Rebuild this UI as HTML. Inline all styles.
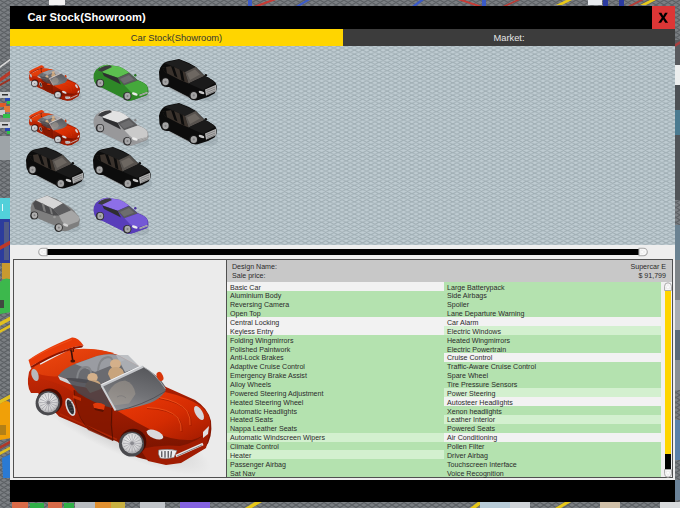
<!DOCTYPE html>
<html><head><meta charset="utf-8">
<style>
html,body{margin:0;padding:0;}
body{width:680px;height:508px;position:relative;overflow:hidden;background:#74787b;font-family:"Liberation Sans",sans-serif;}
.a{position:absolute;}
.rb{position:absolute;}
.rt{position:absolute;font-size:7.1px;line-height:8.87px;color:#2b2b2b;white-space:nowrap;}
.w{background:#f2f2f2;}
.g{background:#b4e2af;}
.l{background:#d3f0cf;}
</style></head><body>
<!-- background world -->
<svg class="a" style="left:0;top:0" width="680" height="508">
<defs>
<pattern id="bgp" width="8" height="5" patternUnits="userSpaceOnUse">
<rect width="8" height="5" fill="#7b7f83"/>
<path d="M0 0L4 2.5L8 0M0 5L4 2.5L8 5" stroke="#5c6064" stroke-width="1.1" fill="none"/>
</pattern>
</defs>
<rect width="680" height="508" fill="url(#bgp)"/>
<g>
<!-- left strip -->
<path d="M0,66 L11,58 L11,60 L0,68Z" fill="#d8d8d8"/>
<path d="M0,78 L11,70 L11,74 L0,82Z" fill="#b83a2a"/>
<path d="M0,84 L11,78 L11,80 L0,86Z" fill="#a03020"/>
<rect x="0" y="92" width="10" height="6" fill="#d0d2d4"/>
<rect x="2" y="94" width="6" height="1.5" fill="#303030"/>
<rect x="5" y="98" width="6" height="3" fill="#2a48b0"/>
<rect x="7" y="101" width="4" height="3" fill="#30c048"/>
<rect x="0" y="103" width="6" height="4" fill="#e05a28"/>
<rect x="4" y="106" width="7" height="6" fill="#e07838"/>
<rect x="0" y="110" width="5" height="5" fill="#c8cacc"/>
<rect x="3" y="114" width="8" height="4" fill="#30c048"/>
<rect x="0" y="118" width="11" height="4" fill="#8a9090"/>
<rect x="0" y="122" width="10" height="6" fill="#d0d2d4"/>
<rect x="2" y="124" width="6" height="1.5" fill="#303030"/>
<rect x="5" y="128" width="6" height="3" fill="#2a48b0"/>
<rect x="7" y="131" width="4" height="3" fill="#30c048"/>
<rect x="0" y="136" width="11" height="24" fill="#9ea4a8"/>
<rect x="0" y="198" width="11" height="21" fill="#52d0da"/>
<rect x="2" y="204" width="1" height="7" fill="#e8f8fa"/>
<rect x="0" y="219" width="11" height="44" fill="#2c3c9c"/>
<rect x="4" y="222" width="5" height="38" fill="#6a7078" opacity="0.6"/>
<path d="M0,246 L11,240 L11,244 L0,250Z" fill="#c03828"/>
<rect x="2" y="263" width="8" height="16" fill="#c89a30"/>
<path d="M0,282 Q6,276 11,280 L11,312 L0,314Z" fill="#3cb84c"/>
<rect x="0" y="300" width="4" height="8" fill="#404a40"/>
<path d="M0,322 L11,316 L11,320 L0,326Z" fill="#e0c020"/>
<path d="M0,330 L11,324 L11,327 L0,333Z" fill="#e0c020"/>
<path d="M0,400 L11,394 L11,398 L0,404Z" fill="#e0c020"/>
<path d="M0,404 Q7,398 11,404 L11,438 L0,440Z" fill="#f0a008"/>
<rect x="0" y="425" width="6" height="10" fill="#8a6a20" opacity="0.6"/>
<path d="M0,446 L11,440 L11,443 L0,449Z" fill="#b03828"/>
<path d="M0,452 L11,446 L11,449 L0,455Z" fill="#e0c020"/>
<path d="M2,458 L11,454 L11,478 L3,478Z" fill="#2a7ad4"/>
<!-- right strip -->
<rect x="675" y="40" width="5" height="25" fill="#585a5e"/>
<path d="M675,44 L680,41 L680,44 L675,47Z" fill="#a84040"/>
<rect x="675" y="65" width="5" height="20" fill="#eceeee"/>
<rect x="675" y="85" width="5" height="25" fill="#4c5054"/>
<rect x="675" y="110" width="5" height="25" fill="#4a7a90"/>
<rect x="675" y="135" width="5" height="65" fill="#505458"/>
<rect x="675" y="225" width="5" height="35" fill="#6a8292"/>
<rect x="675" y="260" width="5" height="40" fill="#7e8488"/>
<rect x="675" y="300" width="5" height="30" fill="#a8adb2"/>
<rect x="675" y="330" width="5" height="30" fill="#5a6a78"/>
<rect x="675" y="360" width="5" height="30" fill="#8a9094"/>
<rect x="675" y="420" width="5" height="40" fill="#5a80a8"/>
<rect x="675" y="480" width="5" height="20" fill="#6a8298"/>
<!-- top strip -->
<rect x="49" y="0" width="16" height="5" fill="#f2f2f2"/>
<rect x="248" y="0" width="4" height="6" fill="#3a5ac8"/>
<path d="M254,6 L270,0 L276,0 L260,6Z" fill="#c83a34"/>
<path d="M296,6 L306,0 L310,0 L300,6Z" fill="#3a5ac8"/>
<path d="M412,6 L420,0 L424,0 L416,6Z" fill="#3a5ac8"/>
<path d="M458,0 L476,6 L482,6 L464,0Z" fill="#c83a34"/>
<rect x="482" y="0" width="4" height="6" fill="#3a5ac8"/>
<path d="M503,6 L516,0 L520,0 L507,6Z" fill="#b83a34"/>
<path d="M556,5 L566,0 L572,0 L562,5Z" fill="#e8c818"/>
<rect x="588" y="0" width="14" height="5" fill="#e8eaee"/>
<rect x="603" y="0" width="5" height="6" fill="#2a3aa0"/>
<rect x="619" y="0" width="5" height="6" fill="#2a3aa0"/>
<path d="M628,6 L640,0 L644,0 L632,6Z" fill="#b83a34"/>
<path d="M640,5 L650,0 L656,0 L646,5Z" fill="#e8c818"/>
<!-- bottom strip -->
<rect x="12" y="502" width="16" height="6" fill="#d86a48"/>
<rect x="30" y="503" width="14" height="5" fill="#30b048"/>
<rect x="48" y="502" width="14" height="6" fill="#d86a48"/>
<rect x="64" y="503" width="10" height="5" fill="#30b048"/>
<rect x="75" y="502" width="20" height="6" fill="#b8bcc0"/>
<rect x="95" y="502" width="16" height="6" fill="#e09030"/>
<rect x="111" y="502" width="14" height="6" fill="#c8b040"/>
<rect x="140" y="502" width="25" height="6" fill="#c0c4c8"/>
<rect x="180" y="502" width="30" height="6" fill="#8462e0"/>
<path d="M245,508 L255,502 L262,502 L252,508Z" fill="#e8c818"/>
<path d="M470,508 L478,502 L484,502 L476,508Z" fill="#e8c818"/>
<rect x="480" y="502" width="30" height="6" fill="#b8ccd8"/>
<rect x="510" y="502" width="20" height="6" fill="#d0d4d8"/>
<path d="M555,508 L565,502 L571,502 L561,508Z" fill="#e8c818"/>
<rect x="600" y="502" width="20" height="6" fill="#d0c0a8"/>
<rect x="660" y="502" width="20" height="6" fill="#d8dadc"/>
</g>
</svg>
<!-- window -->
<div class="a" style="left:10px;top:6px;width:665px;height:496px;background:#eeeeee"></div>
<div class="a" style="left:10px;top:6px;width:642px;height:23px;background:#000"></div>
<div class="a" style="left:27.5px;top:6px;height:23px;line-height:23px;color:#fff;font-weight:bold;font-size:11.15px;letter-spacing:0.07px;white-space:nowrap">Car Stock(Showroom)</div>
<div class="a" style="left:652px;top:6px;width:23px;height:23px;background:#dc3636"></div>
<svg class="a" style="left:658px;top:12px" width="11" height="12" viewBox="0 0 11 12"><path d="M0.5,0.8 L3.4,0.8 L5.2,3.9 L7.0,0.8 L9.8,0.8 L6.6,5.7 L10.1,10.8 L7.2,10.8 L5.2,7.6 L3.1,10.8 L0.3,10.8 L3.8,5.7 Z" fill="#000"/></svg>
<div class="a" style="left:10px;top:29px;width:333px;height:16px;padding-top:1px;background:#ffd500;color:#333;font-size:9.3px;line-height:17px;text-align:center">Car Stock(Showroom)</div>
<div class="a" style="left:343px;top:29px;width:332px;height:16px;padding-top:1px;background:#3c3c3c;color:#e6e6e6;font-size:9.3px;line-height:17px;text-align:center">Market:</div>
<!-- floor -->
<svg class="a" style="left:10px;top:46px" width="665" height="199">
<defs>
<pattern id="fp" width="8.2" height="4.1" patternUnits="userSpaceOnUse">
<rect width="8.2" height="4.1" fill="#bfccd2"/>
<path d="M0 0L4.1 2.05L8.2 0M0 4.1L4.1 2.05L8.2 4.1" stroke="#9aa8ae" stroke-width="0.9" fill="none"/>
</pattern>
</defs>

<rect width="665" height="199" fill="url(#fp)"/>

</svg>
<svg class="a" style="left:0;top:0" width="680" height="508" viewBox="0 0 680 508"><g><ellipse cx="57" cy="86" rx="27" ry="10" fill="#7d8d94" opacity="0.28" transform="rotate(27 57 86)"/><ellipse cx="57" cy="131" rx="27" ry="10" fill="#7d8d94" opacity="0.28" transform="rotate(27 57 131)"/><ellipse cx="123" cy="86" rx="29" ry="10.5" fill="#7d8d94" opacity="0.28" transform="rotate(27 123 86)"/><ellipse cx="123" cy="131" rx="29" ry="10.5" fill="#7d8d94" opacity="0.28" transform="rotate(27 123 131)"/><ellipse cx="123" cy="219" rx="29" ry="10.5" fill="#7d8d94" opacity="0.28" transform="rotate(27 123 219)"/><ellipse cx="190" cy="84" rx="31" ry="12" fill="#7d8d94" opacity="0.28" transform="rotate(27 190 84)"/><ellipse cx="190" cy="128" rx="31" ry="12" fill="#7d8d94" opacity="0.28" transform="rotate(27 190 128)"/><ellipse cx="57" cy="172" rx="31" ry="12" fill="#7d8d94" opacity="0.28" transform="rotate(27 57 172)"/><ellipse cx="124" cy="172" rx="31" ry="12" fill="#7d8d94" opacity="0.28" transform="rotate(27 124 172)"/><ellipse cx="57" cy="217" rx="26" ry="10.5" fill="#7d8d94" opacity="0.28" transform="rotate(27 57 217)"/></g><use href="#conv" transform="translate(21.2,-28.5) scale(0.278)"/><use href="#conv" transform="translate(21.2,16.2) scale(0.278)"/><g transform="translate(93,64)"><path d="M0.7,14 Q0.5,9 3,6 L6.5,3.2 Q10,1 14,0.8 L26.5,2.7 Q32,5 36,8.4 L44.7,16.1 Q51,18.5 53.5,21 Q56,24 55.5,28 L54,31 L41,35.7 Q37,37 34,36.5 L30,34 L9,23.5 Q6,23.5 4,21.5 Q1,18.5 0.7,14 Z" fill="#2a7524"/><path d="M0.7,14 Q0.5,9 3,6 L6.5,3.2 L10,9 L24.6,13.7 L31.3,21.3 Q36,27 42,31 L54,28 L55.5,28 L54,31 L41,35.7 Q37,37 34,36.5 L30,34 L9,23.5 Q6,23.5 4,21.5 Q1,18.5 0.7,14 Z" fill="#2f8a28" opacity="0.9"/><path d="M6.5,3.2 Q10,1 14,0.8 L26.5,2.7 Q32,5 36,8.4 L24.6,13.7 L10,8.5 Z" fill="#5cbf4f"/><path d="M5,6.5 L8,3.5 Q13,1.2 17,1.3 L19,3 L9,7.8 Z" fill="#3c3c3e"/><path d="M9.3,8.4 L24.6,13.7 L28,20.5 L11,12 Z" fill="#2e2e30"/><path d="M24.6,13.7 L36.1,8.9 L44.7,16.6 L31.3,21.3 Z" fill="#5a5a5c"/><path d="M27,15 L36,11 L41,15.8 L31,19.5 Z" fill="#7a7a7c" opacity="0.6"/><path d="M31.3,21.3 L44.7,16.6 Q52,19 54,22 Q55.5,26 54,28 L42,31 Q36,27 31.3,21.3 Z" fill="#45a83c"/><circle cx="42.3" cy="11.3" r="1.2" fill="#2a7524"/><circle cx="7" cy="19.2" r="4.1" fill="#303032"/><ellipse cx="7.3" cy="19.0" rx="2.95" ry="3.20" fill="#a8a8aa"/><circle cx="7.3" cy="19.0" r="1.02" fill="#808082"/><circle cx="34.2" cy="32.3" r="4.2" fill="#303032"/><ellipse cx="34.5" cy="32.099999999999994" rx="3.02" ry="3.28" fill="#a8a8aa"/><circle cx="34.5" cy="32.099999999999994" r="1.05" fill="#808082"/><ellipse cx="41.8" cy="30" rx="3" ry="1.3" fill="#ececec" transform="rotate(18 41.8 30)"/><path d="M46.5,31.6 L54.6,28.6" stroke="#c8c8c8" stroke-width="1.6"/><path d="M46.5,31.6 L54.6,28.6" stroke="#666" stroke-width="0.5"/></g><g transform="translate(93,109)"><path d="M0.7,14 Q0.5,9 3,6 L6.5,3.2 Q10,1 14,0.8 L26.5,2.7 Q32,5 36,8.4 L44.7,16.1 Q51,18.5 53.5,21 Q56,24 55.5,28 L54,31 L41,35.7 Q37,37 34,36.5 L30,34 L9,23.5 Q6,23.5 4,21.5 Q1,18.5 0.7,14 Z" fill="#858587"/><path d="M0.7,14 Q0.5,9 3,6 L6.5,3.2 L10,9 L24.6,13.7 L31.3,21.3 Q36,27 42,31 L54,28 L55.5,28 L54,31 L41,35.7 Q37,37 34,36.5 L30,34 L9,23.5 Q6,23.5 4,21.5 Q1,18.5 0.7,14 Z" fill="#9a9a9c" opacity="0.9"/><path d="M6.5,3.2 Q10,1 14,0.8 L26.5,2.7 Q32,5 36,8.4 L24.6,13.7 L10,8.5 Z" fill="#e2e2e2"/><path d="M5,6.5 L8,3.5 Q13,1.2 17,1.3 L19,3 L9,7.8 Z" fill="#3c3c3e"/><path d="M9.3,8.4 L24.6,13.7 L28,20.5 L11,12 Z" fill="#2e2e30"/><path d="M24.6,13.7 L36.1,8.9 L44.7,16.6 L31.3,21.3 Z" fill="#5a5a5c"/><path d="M27,15 L36,11 L41,15.8 L31,19.5 Z" fill="#7a7a7c" opacity="0.6"/><path d="M31.3,21.3 L44.7,16.6 Q52,19 54,22 Q55.5,26 54,28 L42,31 Q36,27 31.3,21.3 Z" fill="#cacaca"/><circle cx="42.3" cy="11.3" r="1.2" fill="#858587"/><circle cx="7" cy="19.2" r="4.1" fill="#303032"/><ellipse cx="7.3" cy="19.0" rx="2.95" ry="3.20" fill="#a8a8aa"/><circle cx="7.3" cy="19.0" r="1.02" fill="#808082"/><circle cx="34.2" cy="32.3" r="4.2" fill="#303032"/><ellipse cx="34.5" cy="32.099999999999994" rx="3.02" ry="3.28" fill="#a8a8aa"/><circle cx="34.5" cy="32.099999999999994" r="1.05" fill="#808082"/><ellipse cx="41.8" cy="30" rx="3" ry="1.3" fill="#ececec" transform="rotate(18 41.8 30)"/><path d="M46.5,31.6 L54.6,28.6" stroke="#c8c8c8" stroke-width="1.6"/><path d="M46.5,31.6 L54.6,28.6" stroke="#666" stroke-width="0.5"/></g><g transform="translate(93,197)"><path d="M0.7,14 Q0.5,9 3,6 L6.5,3.2 Q10,1 14,0.8 L26.5,2.7 Q32,5 36,8.4 L44.7,16.1 Q51,18.5 53.5,21 Q56,24 55.5,28 L54,31 L41,35.7 Q37,37 34,36.5 L30,34 L9,23.5 Q6,23.5 4,21.5 Q1,18.5 0.7,14 Z" fill="#48309e"/><path d="M0.7,14 Q0.5,9 3,6 L6.5,3.2 L10,9 L24.6,13.7 L31.3,21.3 Q36,27 42,31 L54,28 L55.5,28 L54,31 L41,35.7 Q37,37 34,36.5 L30,34 L9,23.5 Q6,23.5 4,21.5 Q1,18.5 0.7,14 Z" fill="#5a3fbc" opacity="0.9"/><path d="M6.5,3.2 Q10,1 14,0.8 L26.5,2.7 Q32,5 36,8.4 L24.6,13.7 L10,8.5 Z" fill="#8d6fe8"/><path d="M5,6.5 L8,3.5 Q13,1.2 17,1.3 L19,3 L9,7.8 Z" fill="#3c3c3e"/><path d="M9.3,8.4 L24.6,13.7 L28,20.5 L11,12 Z" fill="#2e2e30"/><path d="M24.6,13.7 L36.1,8.9 L44.7,16.6 L31.3,21.3 Z" fill="#5a5a5c"/><path d="M27,15 L36,11 L41,15.8 L31,19.5 Z" fill="#7a7a7c" opacity="0.6"/><path d="M31.3,21.3 L44.7,16.6 Q52,19 54,22 Q55.5,26 54,28 L42,31 Q36,27 31.3,21.3 Z" fill="#7458d6"/><circle cx="42.3" cy="11.3" r="1.2" fill="#48309e"/><circle cx="7" cy="19.2" r="4.1" fill="#303032"/><ellipse cx="7.3" cy="19.0" rx="2.95" ry="3.20" fill="#a8a8aa"/><circle cx="7.3" cy="19.0" r="1.02" fill="#808082"/><circle cx="34.2" cy="32.3" r="4.2" fill="#303032"/><ellipse cx="34.5" cy="32.099999999999994" rx="3.02" ry="3.28" fill="#a8a8aa"/><circle cx="34.5" cy="32.099999999999994" r="1.05" fill="#808082"/><ellipse cx="41.8" cy="30" rx="3" ry="1.3" fill="#ececec" transform="rotate(18 41.8 30)"/><path d="M46.5,31.6 L54.6,28.6" stroke="#c8c8c8" stroke-width="1.6"/><path d="M46.5,31.6 L54.6,28.6" stroke="#666" stroke-width="0.5"/></g><g transform="translate(158,59)"><path d="M1,13 Q2,7 6,4 L9,2.5 L21,0 Q30,3 38,8 L47,17 Q54,20 57.5,23.5 Q59.5,27 58.5,31 L56.5,34.5 L50,38 L42,40.5 Q38,42 35,41 L31,38.5 L11,28 Q6,28 4,26 L1.5,21 Z" fill="#0c0c0c"/><path d="M6,4 L21,0.5 L37.5,8 L27,13 L14,7 Z" fill="#1e1e1e"/><path d="M4.5,8.5 L14,7 L27,13 L30.5,24.5 L21,20.5 L6.5,13 Z" fill="#3a322c"/><path d="M13,7 L16,7.8 L19.5,18.5 L16.5,17 Z M21.5,10.5 L24.5,12 L26.5,22.5 L23.5,21 Z M4.5,8.5 L8,8 L9,14.5 L6.5,13 Z" fill="#0c0c0c"/><path d="M27,13 L37.5,8 L46.5,17 L30.5,24.5 Z" fill="#57524e"/><path d="M29,14.5 L37,10.5 L42,15.5 L32,21 Z" fill="#76706a" opacity="0.7"/><path d="M30.5,24.5 L46.5,17 Q54,20 57,24 L45,31 Z" fill="#1a1a1a"/><path d="M47,30.5 L58,25.8 L58.2,32.3 L48,36.8 Z" fill="#b0b0b0"/><path d="M48.5,31.5 L57,28 M48.7,33.5 L57.2,30 M49,35.3 L57.4,31.8" stroke="#555" stroke-width="0.5"/><ellipse cx="43.5" cy="33.5" rx="3" ry="1.3" fill="#c8c8c8" transform="rotate(20 43.5 33.5)"/><path d="M11,28.5 L31,38.5" stroke="#8a8a8a" stroke-width="0.6"/><circle cx="47.8" cy="16.2" r="1.3" fill="#111"/><circle cx="7.2" cy="23" r="4.4" fill="#1a1a1a"/><ellipse cx="7.5" cy="22.8" rx="3.17" ry="3.43" fill="#a4a4a4"/><circle cx="7.5" cy="22.8" r="1.10" fill="#808082"/><circle cx="35.5" cy="36.6" r="4.5" fill="#1a1a1a"/><ellipse cx="35.8" cy="36.4" rx="3.24" ry="3.51" fill="#a4a4a4"/><circle cx="35.8" cy="36.4" r="1.12" fill="#808082"/></g><g transform="translate(158,103)"><path d="M1,13 Q2,7 6,4 L9,2.5 L21,0 Q30,3 38,8 L47,17 Q54,20 57.5,23.5 Q59.5,27 58.5,31 L56.5,34.5 L50,38 L42,40.5 Q38,42 35,41 L31,38.5 L11,28 Q6,28 4,26 L1.5,21 Z" fill="#0c0c0c"/><path d="M6,4 L21,0.5 L37.5,8 L27,13 L14,7 Z" fill="#1e1e1e"/><path d="M4.5,8.5 L14,7 L27,13 L30.5,24.5 L21,20.5 L6.5,13 Z" fill="#3a322c"/><path d="M13,7 L16,7.8 L19.5,18.5 L16.5,17 Z M21.5,10.5 L24.5,12 L26.5,22.5 L23.5,21 Z M4.5,8.5 L8,8 L9,14.5 L6.5,13 Z" fill="#0c0c0c"/><path d="M27,13 L37.5,8 L46.5,17 L30.5,24.5 Z" fill="#57524e"/><path d="M29,14.5 L37,10.5 L42,15.5 L32,21 Z" fill="#76706a" opacity="0.7"/><path d="M30.5,24.5 L46.5,17 Q54,20 57,24 L45,31 Z" fill="#1a1a1a"/><path d="M47,30.5 L58,25.8 L58.2,32.3 L48,36.8 Z" fill="#b0b0b0"/><path d="M48.5,31.5 L57,28 M48.7,33.5 L57.2,30 M49,35.3 L57.4,31.8" stroke="#555" stroke-width="0.5"/><ellipse cx="43.5" cy="33.5" rx="3" ry="1.3" fill="#c8c8c8" transform="rotate(20 43.5 33.5)"/><path d="M11,28.5 L31,38.5" stroke="#8a8a8a" stroke-width="0.6"/><circle cx="47.8" cy="16.2" r="1.3" fill="#111"/><circle cx="7.2" cy="23" r="4.4" fill="#1a1a1a"/><ellipse cx="7.5" cy="22.8" rx="3.17" ry="3.43" fill="#a4a4a4"/><circle cx="7.5" cy="22.8" r="1.10" fill="#808082"/><circle cx="35.5" cy="36.6" r="4.5" fill="#1a1a1a"/><ellipse cx="35.8" cy="36.4" rx="3.24" ry="3.51" fill="#a4a4a4"/><circle cx="35.8" cy="36.4" r="1.12" fill="#808082"/></g><g transform="translate(25,147)"><path d="M1,13 Q2,7 6,4 L9,2.5 L21,0 Q30,3 38,8 L47,17 Q54,20 57.5,23.5 Q59.5,27 58.5,31 L56.5,34.5 L50,38 L42,40.5 Q38,42 35,41 L31,38.5 L11,28 Q6,28 4,26 L1.5,21 Z" fill="#0c0c0c"/><path d="M6,4 L21,0.5 L37.5,8 L27,13 L14,7 Z" fill="#1e1e1e"/><path d="M4.5,8.5 L14,7 L27,13 L30.5,24.5 L21,20.5 L6.5,13 Z" fill="#3a322c"/><path d="M13,7 L16,7.8 L19.5,18.5 L16.5,17 Z M21.5,10.5 L24.5,12 L26.5,22.5 L23.5,21 Z M4.5,8.5 L8,8 L9,14.5 L6.5,13 Z" fill="#0c0c0c"/><path d="M27,13 L37.5,8 L46.5,17 L30.5,24.5 Z" fill="#57524e"/><path d="M29,14.5 L37,10.5 L42,15.5 L32,21 Z" fill="#76706a" opacity="0.7"/><path d="M30.5,24.5 L46.5,17 Q54,20 57,24 L45,31 Z" fill="#1a1a1a"/><path d="M47,30.5 L58,25.8 L58.2,32.3 L48,36.8 Z" fill="#b0b0b0"/><path d="M48.5,31.5 L57,28 M48.7,33.5 L57.2,30 M49,35.3 L57.4,31.8" stroke="#555" stroke-width="0.5"/><ellipse cx="43.5" cy="33.5" rx="3" ry="1.3" fill="#c8c8c8" transform="rotate(20 43.5 33.5)"/><path d="M11,28.5 L31,38.5" stroke="#8a8a8a" stroke-width="0.6"/><circle cx="47.8" cy="16.2" r="1.3" fill="#111"/><circle cx="7.2" cy="23" r="4.4" fill="#1a1a1a"/><ellipse cx="7.5" cy="22.8" rx="3.17" ry="3.43" fill="#a4a4a4"/><circle cx="7.5" cy="22.8" r="1.10" fill="#808082"/><circle cx="35.5" cy="36.6" r="4.5" fill="#1a1a1a"/><ellipse cx="35.8" cy="36.4" rx="3.24" ry="3.51" fill="#a4a4a4"/><circle cx="35.8" cy="36.4" r="1.12" fill="#808082"/></g><g transform="translate(92,147)"><path d="M1,13 Q2,7 6,4 L9,2.5 L21,0 Q30,3 38,8 L47,17 Q54,20 57.5,23.5 Q59.5,27 58.5,31 L56.5,34.5 L50,38 L42,40.5 Q38,42 35,41 L31,38.5 L11,28 Q6,28 4,26 L1.5,21 Z" fill="#0c0c0c"/><path d="M6,4 L21,0.5 L37.5,8 L27,13 L14,7 Z" fill="#1e1e1e"/><path d="M4.5,8.5 L14,7 L27,13 L30.5,24.5 L21,20.5 L6.5,13 Z" fill="#3a322c"/><path d="M13,7 L16,7.8 L19.5,18.5 L16.5,17 Z M21.5,10.5 L24.5,12 L26.5,22.5 L23.5,21 Z M4.5,8.5 L8,8 L9,14.5 L6.5,13 Z" fill="#0c0c0c"/><path d="M27,13 L37.5,8 L46.5,17 L30.5,24.5 Z" fill="#57524e"/><path d="M29,14.5 L37,10.5 L42,15.5 L32,21 Z" fill="#76706a" opacity="0.7"/><path d="M30.5,24.5 L46.5,17 Q54,20 57,24 L45,31 Z" fill="#1a1a1a"/><path d="M47,30.5 L58,25.8 L58.2,32.3 L48,36.8 Z" fill="#b0b0b0"/><path d="M48.5,31.5 L57,28 M48.7,33.5 L57.2,30 M49,35.3 L57.4,31.8" stroke="#555" stroke-width="0.5"/><ellipse cx="43.5" cy="33.5" rx="3" ry="1.3" fill="#c8c8c8" transform="rotate(20 43.5 33.5)"/><path d="M11,28.5 L31,38.5" stroke="#8a8a8a" stroke-width="0.6"/><circle cx="47.8" cy="16.2" r="1.3" fill="#111"/><circle cx="7.2" cy="23" r="4.4" fill="#1a1a1a"/><ellipse cx="7.5" cy="22.8" rx="3.17" ry="3.43" fill="#a4a4a4"/><circle cx="7.5" cy="22.8" r="1.10" fill="#808082"/><circle cx="35.5" cy="36.6" r="4.5" fill="#1a1a1a"/><ellipse cx="35.8" cy="36.4" rx="3.24" ry="3.51" fill="#a4a4a4"/><circle cx="35.8" cy="36.4" r="1.12" fill="#808082"/></g><g transform="translate(30,195)"><path d="M0.7,17 Q0,12 2,8 L5.5,5 L17,0.5 Q26,3 33,8 L40.5,12.5 Q45,16 47,19.5 Q50,22 49.8,26 L48.5,31 L38.5,35.6 Q34,37 31,35.5 L27,31.5 L8,23.5 Q4,23 2,20.5 Z" fill="#7e7e7e"/><path d="M5.5,5 L17.2,0.7 L33,8.2 L23.4,13.9 Z" fill="#d6d6d6"/><path d="M3,8.5 L5.5,5.5 L23.4,13.9 L29,20.5 L23.4,20.5 L5,14 Z" fill="#4c4c4e"/><path d="M11.5,8 L14,9 L16,17 L13.5,16 Z M19,11.5 L21,12.3 L23,19.5 L21,19 Z" fill="#7e7e7e"/><path d="M23.4,13.9 L33,8.2 L41.3,15.3 L29,20.5 Z" fill="#5c5c5e"/><path d="M29,20.5 L41.3,15.3 Q46,18 49,22 Q49.5,25 48,26.5 L36,31 Q31,26 29,20.5 Z" fill="#a6a6a6"/><ellipse cx="35.6" cy="30" rx="2.8" ry="1.3" fill="#d4d4d4" transform="rotate(20 35.6 30)"/><circle cx="24.5" cy="22" r="1.3" fill="#9a9a9a"/><circle cx="4.2" cy="20.5" r="4" fill="#2a2a2a"/><ellipse cx="4.5" cy="20.3" rx="2.88" ry="3.12" fill="#b0b0b0"/><circle cx="4.5" cy="20.3" r="1.00" fill="#808082"/><circle cx="28.6" cy="32.8" r="4.2" fill="#2a2a2a"/><ellipse cx="28.900000000000002" cy="32.599999999999994" rx="3.02" ry="3.28" fill="#b0b0b0"/><circle cx="28.900000000000002" cy="32.599999999999994" r="1.05" fill="#808082"/></g></svg>
<!-- h scrollbar -->
<div class="a" style="left:47px;top:249px;width:592px;height:6px;background:#000"></div>
<svg class="a" style="left:38px;top:247px" width="10" height="10" viewBox="0 0 10 10"><path d="M4.5,1.2 H9 V8.8 H4.5 A3.6,3.6 0 0 1 4.5,1.2 Z" fill="#f8f8f8" stroke="#a8a8a8" stroke-width="1.1"/><path d="M3.2,5 L7,3 L7,7 Z" fill="#ffffff"/><path d="M3.2,5 L7,3 L7,7 Z" fill="none" stroke="#d8d8d8" stroke-width="0.4"/></svg>
<svg class="a" style="left:638px;top:247px" width="10" height="10" viewBox="0 0 10 10"><path d="M5.5,1.2 H1 V8.8 H5.5 A3.6,3.6 0 0 0 5.5,1.2 Z" fill="#f8f8f8" stroke="#a8a8a8" stroke-width="1.1"/><path d="M6.8,5 L3,3 L3,7 Z" fill="#ffffff" stroke="#d8d8d8" stroke-width="0.4"/></svg>
<!-- details panel -->
<div class="a" style="left:13px;top:259px;width:658px;height:217px;border:1px solid #505050;background:#ebebeb"></div>
<div class="a" style="left:226px;top:260px;width:1px;height:217px;background:#505050"></div>
<div class="a" style="left:227px;top:260px;width:445px;height:22px;background:#c8c8c8"></div>
<div class="a" style="left:232px;top:262.5px;font-size:7.1px;line-height:9px;color:#2b2b2b;white-space:nowrap">Design Name:<br>Sale price:</div>
<div class="a" style="left:566px;top:262.5px;width:100px;text-align:right;font-size:7.1px;line-height:9px;color:#2b2b2b;white-space:nowrap">Supercar E<br>$ 91,799</div>
<div class="a" style="left:661px;top:282px;width:11px;height:195px;background:#f0f0f0"></div>
<div class="rb w" style="left:227px;top:282px;height:9px;width:217px"></div>
<div class="rb g" style="left:444px;top:282px;height:9px;width:217px"></div>
<div class="rb g" style="left:227px;top:291px;height:9px;width:217px"></div>
<div class="rb g" style="left:444px;top:291px;height:9px;width:217px"></div>
<div class="rb g" style="left:227px;top:300px;height:9px;width:217px"></div>
<div class="rb g" style="left:444px;top:300px;height:9px;width:217px"></div>
<div class="rb g" style="left:227px;top:309px;height:8px;width:217px"></div>
<div class="rb g" style="left:444px;top:309px;height:8px;width:217px"></div>
<div class="rb w" style="left:227px;top:317px;height:9px;width:217px"></div>
<div class="rb w" style="left:444px;top:317px;height:9px;width:217px"></div>
<div class="rb w" style="left:227px;top:326px;height:9px;width:217px"></div>
<div class="rb l" style="left:444px;top:326px;height:9px;width:217px"></div>
<div class="rb g" style="left:227px;top:335px;height:9px;width:217px"></div>
<div class="rb g" style="left:444px;top:335px;height:9px;width:217px"></div>
<div class="rb g" style="left:227px;top:344px;height:9px;width:217px"></div>
<div class="rb g" style="left:444px;top:344px;height:9px;width:217px"></div>
<div class="rb g" style="left:227px;top:353px;height:9px;width:217px"></div>
<div class="rb w" style="left:444px;top:353px;height:9px;width:217px"></div>
<div class="rb g" style="left:227px;top:362px;height:9px;width:217px"></div>
<div class="rb g" style="left:444px;top:362px;height:9px;width:217px"></div>
<div class="rb g" style="left:227px;top:371px;height:9px;width:217px"></div>
<div class="rb g" style="left:444px;top:371px;height:9px;width:217px"></div>
<div class="rb g" style="left:227px;top:380px;height:8px;width:217px"></div>
<div class="rb g" style="left:444px;top:380px;height:8px;width:217px"></div>
<div class="rb g" style="left:227px;top:388px;height:9px;width:217px"></div>
<div class="rb l" style="left:444px;top:388px;height:9px;width:217px"></div>
<div class="rb g" style="left:227px;top:397px;height:9px;width:217px"></div>
<div class="rb w" style="left:444px;top:397px;height:9px;width:217px"></div>
<div class="rb g" style="left:227px;top:406px;height:9px;width:217px"></div>
<div class="rb g" style="left:444px;top:406px;height:9px;width:217px"></div>
<div class="rb g" style="left:227px;top:415px;height:9px;width:217px"></div>
<div class="rb l" style="left:444px;top:415px;height:9px;width:217px"></div>
<div class="rb g" style="left:227px;top:424px;height:9px;width:217px"></div>
<div class="rb g" style="left:444px;top:424px;height:9px;width:217px"></div>
<div class="rb l" style="left:227px;top:433px;height:9px;width:217px"></div>
<div class="rb w" style="left:444px;top:433px;height:9px;width:217px"></div>
<div class="rb g" style="left:227px;top:442px;height:8px;width:217px"></div>
<div class="rb g" style="left:444px;top:442px;height:8px;width:217px"></div>
<div class="rb l" style="left:227px;top:450px;height:9px;width:217px"></div>
<div class="rb g" style="left:444px;top:450px;height:9px;width:217px"></div>
<div class="rb g" style="left:227px;top:459px;height:9px;width:217px"></div>
<div class="rb g" style="left:444px;top:459px;height:9px;width:217px"></div>
<div class="rb g" style="left:227px;top:468px;height:9px;width:217px"></div>
<div class="rb g" style="left:444px;top:468px;height:9px;width:217px"></div>
<div class="rt" style="left:230px;top:283.50px">Basic Car</div>
<div class="rt" style="left:447px;top:283.50px">Large Batterypack</div>
<div class="rt" style="left:230px;top:292.36px">Aluminium Body</div>
<div class="rt" style="left:447px;top:292.36px">Side Airbags</div>
<div class="rt" style="left:230px;top:301.23px">Reversing Camera</div>
<div class="rt" style="left:447px;top:301.23px">Spoiler</div>
<div class="rt" style="left:230px;top:310.09px">Open Top</div>
<div class="rt" style="left:447px;top:310.09px">Lane Departure Warning</div>
<div class="rt" style="left:230px;top:318.95px">Central Locking</div>
<div class="rt" style="left:447px;top:318.95px">Car Alarm</div>
<div class="rt" style="left:230px;top:327.82px">Keyless Entry</div>
<div class="rt" style="left:447px;top:327.82px">Electric Windows</div>
<div class="rt" style="left:230px;top:336.68px">Folding Wingmirrors</div>
<div class="rt" style="left:447px;top:336.68px">Heated Wingmirrors</div>
<div class="rt" style="left:230px;top:345.55px">Polished Paintwork</div>
<div class="rt" style="left:447px;top:345.55px">Electric Powertrain</div>
<div class="rt" style="left:230px;top:354.41px">Anti-Lock Brakes</div>
<div class="rt" style="left:447px;top:354.41px">Cruise Control</div>
<div class="rt" style="left:230px;top:363.27px">Adaptive Cruise Control</div>
<div class="rt" style="left:447px;top:363.27px">Traffic-Aware Cruise Control</div>
<div class="rt" style="left:230px;top:372.14px">Emergency Brake Assist</div>
<div class="rt" style="left:447px;top:372.14px">Spare Wheel</div>
<div class="rt" style="left:230px;top:381.00px">Alloy Wheels</div>
<div class="rt" style="left:447px;top:381.00px">Tire Pressure Sensors</div>
<div class="rt" style="left:230px;top:389.86px">Powered Steering Adjustment</div>
<div class="rt" style="left:447px;top:389.86px">Power Steering</div>
<div class="rt" style="left:230px;top:398.73px">Heated Steering Wheel</div>
<div class="rt" style="left:447px;top:398.73px">Autosteer Headlights</div>
<div class="rt" style="left:230px;top:407.59px">Automatic Headlights</div>
<div class="rt" style="left:447px;top:407.59px">Xenon headlights</div>
<div class="rt" style="left:230px;top:416.45px">Heated Seats</div>
<div class="rt" style="left:447px;top:416.45px">Leather Interior</div>
<div class="rt" style="left:230px;top:425.32px">Nappa Leather Seats</div>
<div class="rt" style="left:447px;top:425.32px">Powered Seats</div>
<div class="rt" style="left:230px;top:434.18px">Automatic Windscreen Wipers</div>
<div class="rt" style="left:447px;top:434.18px">Air Conditioning</div>
<div class="rt" style="left:230px;top:443.05px">Climate Control</div>
<div class="rt" style="left:447px;top:443.05px">Pollen Filter</div>
<div class="rt" style="left:230px;top:451.91px">Heater</div>
<div class="rt" style="left:447px;top:451.91px">Driver Airbag</div>
<div class="rt" style="left:230px;top:460.77px">Passenger Airbag</div>
<div class="rt" style="left:447px;top:460.77px">Touchscreen Interface</div>
<div class="rt" style="left:230px;top:469.64px">Sat Nav</div>
<div class="rt" style="left:447px;top:469.64px">Voice Recognition</div>
<!-- v scrollbar -->
<div class="a" style="left:665px;top:290px;width:6px;height:164px;background:#ffd500"></div>
<div class="a" style="left:665px;top:454px;width:6px;height:15px;background:#000"></div>
<svg class="a" style="left:664px;top:282px" width="8" height="9" viewBox="0 0 8 9"><path d="M0.6,8.5 V4.2 A3.4,3.4 0 0 1 7.4,4.2 V8.5 Z" fill="#f8f8f8" stroke="#a8a8a8" stroke-width="1"/><path d="M4,2.6 L6,6.4 L2,6.4 Z" fill="#fff" stroke="#d8d8d8" stroke-width="0.4"/></svg>
<svg class="a" style="left:664px;top:469px" width="8" height="9" viewBox="0 0 8 9"><path d="M0.6,0.5 V4.8 A3.4,3.4 0 0 0 7.4,4.8 V0.5 Z" fill="#f8f8f8" stroke="#a8a8a8" stroke-width="1"/><path d="M4,6.4 L6,2.6 L2,2.6 Z" fill="#fff" stroke="#d8d8d8" stroke-width="0.4"/></svg>
<svg class="a" style="left:0;top:0" width="680" height="508" viewBox="0 0 680 508">
<defs>
<linearGradient id="bcBody" x1="0" y1="0" x2="0.2" y2="1">
<stop offset="0" stop-color="#d83008"/><stop offset="0.5" stop-color="#a81e02"/><stop offset="1" stop-color="#7a1400"/>
</linearGradient>
<linearGradient id="bcHood" x1="0" y1="0" x2="1" y2="1">
<stop offset="0" stop-color="#f03c08"/><stop offset="0.55" stop-color="#d42c02"/><stop offset="1" stop-color="#a01a00"/>
</linearGradient>
<linearGradient id="bcDeck" x1="0" y1="0" x2="1" y2="1">
<stop offset="0" stop-color="#f04a10"/><stop offset="1" stop-color="#d03004"/>
</linearGradient>
<radialGradient id="bcRim" cx="0.45" cy="0.4" r="0.65">
<stop offset="0" stop-color="#f8f8f8"/><stop offset="0.7" stop-color="#d0d0d2"/><stop offset="1" stop-color="#98989c"/>
</radialGradient>
</defs>
<radialGradient id="bcSh" cx="0.5" cy="0.5" r="0.5"><stop offset="0.6" stop-color="#c8c8c8" stop-opacity="0.55"/><stop offset="1" stop-color="#c8c8c8" stop-opacity="0"/></radialGradient>
<ellipse cx="122" cy="430" rx="96" ry="24" fill="url(#bcSh)" transform="rotate(24 122 430)"/>
<g id="conv">
<!-- body base -->
<path d="M29,372 Q26,386 31,393 L38,393 L59,416.5 L118,442 Q126,456 148,460 L166,464 L181,462 L205,448 Q213,438 211,421 Q208,408 195,400 L166,387 L146,370 L118,355 Q100,348 80,349 Q58,350 44,358 Q33,364 29,372 Z" fill="url(#bcBody)"/>
<!-- rear quarter lighter -->
<path d="M30,371 Q36,366 46,367 L62,377 L75,389 L73,392 Q60,383 46,380 Q36,378 30,376 Z" fill="#c42804" opacity="0.7"/>
<!-- door darker panel -->
<path d="M74,390 L112,408 L113,441 L88,430 Q80,418 74,400 Z" fill="#841800" opacity="0.85"/>
<!-- rocker highlight -->
<path d="M60,414 L117,439.5" stroke="#b42806" stroke-width="1.6" fill="none" opacity="0.8"/>
<!-- rear deck top -->
<path d="M31,371 Q38,361 58,352 Q85,345 114,353 L62,376 Q45,378 31,371 Z" fill="url(#bcDeck)"/>
<!-- hood -->
<path d="M116,410 L165,392 Q188,397 202,407 Q212,416 210,428 Q204,437 192,440 Q172,441 155,432 Q135,422 116,410 Z" fill="url(#bcHood)"/>
<path d="M147,408.5 Q170,409 179,419 Q183,426 182,432" stroke="#8a1400" stroke-width="1" fill="none" opacity="0.55"/>
<path d="M147,407.5 Q169,408 178,418 Q182,425 181,431" stroke="#f65a20" stroke-width="0.9" fill="none" opacity="0.8"/>
<path d="M159,398.5 Q180,402 188,412 Q192,419 191,426" stroke="#8a1400" stroke-width="1" fill="none" opacity="0.55"/>
<path d="M159,397.5 Q179,401 187,411 Q191,418 190,425" stroke="#f65a20" stroke-width="0.9" fill="none" opacity="0.8"/>
<!-- front bumper -->
<path d="M140,449 Q160,444 180,446 Q198,442 210,430 L206,448 L181,463 L166,465 L148,461 Z" fill="#a01c02"/>
<!-- cockpit interior -->
<path d="M58,376 Q64,368 75,364 L97,356 Q108,353 117,355 L140,367 L102,384 Q80,385 58,376 Z" fill="#6a6b70"/>
<path d="M75,364 L97,356 Q108,353 117,355 L125,360 L95,372 Z" fill="#9a9ca2"/>
<path d="M58,376 Q80,385 102,384 L100,388 Q78,389 60,380 Z" fill="#d0d2d6"/>
<!-- rear small deflector glass -->
<path d="M116,355 L128,355 L140,367 L125,372 Z" fill="#b5b8bd" opacity="0.85"/>
<!-- roll bars -->
<path d="M98,371 Q99,358 108,357 Q114,357 113,368" stroke="#84868a" stroke-width="1.8" fill="none"/>
<path d="M77,379 Q78,367 86,367 Q92,367 91,377" stroke="#84868a" stroke-width="1.8" fill="none"/>
<!-- seats -->
<ellipse cx="115.5" cy="364" rx="5.5" ry="4.8" fill="#d4b08a"/>
<path d="M108,374 Q109,366 117,367 Q125,368 124,377 L112,382 Z" fill="#c8a47c"/>
<ellipse cx="92.5" cy="377.5" rx="5.2" ry="4.5" fill="#d4b08a"/>
<path d="M85,386 Q87,379 95,380 Q102,381 101,389 L90,393 Z" fill="#c8a47c"/>
<!-- side window (dark glass) -->
<path d="M66,378 Q86,377 102,385 L112,408 Q95,404 78,393 Z" fill="#48484e" opacity="0.85"/>
<!-- windshield glass -->
<linearGradient id="bcGl" x1="0.7" y1="0" x2="0.3" y2="1"><stop offset="0" stop-color="#55565a"/><stop offset="0.6" stop-color="#727377"/><stop offset="1" stop-color="#8e8f93"/></linearGradient>
<path d="M101.5,385.5 L142.5,366.5 Q153,372 161,380.5 Q166.5,387 165.5,391 Q160,399 150,403 Q130,409.5 115.5,410.5 Z" fill="url(#bcGl)"/>
<path d="M108,393 Q114,381 125,380.5 Q134,383 135.5,394 L129,403.5 L113,405.5 Z" fill="#b0a496" opacity="0.45"/>
<path d="M117,397 Q122,394 126,398" stroke="#6a6a6e" stroke-width="0.7" fill="none" opacity="0.6"/>
<!-- windshield frame -->
<path d="M101,385.8 L142.8,366.3" stroke="#c4c6ca" stroke-width="3"/>
<path d="M101.5,384.6 L142.5,365.3" stroke="#eef0f2" stroke-width="1"/>
<path d="M101.8,386 L115.5,410.5" stroke="#cdd0d4" stroke-width="2"/>
<path d="M142.8,366.5 Q155,373 165.5,389" stroke="#a8aaae" stroke-width="0.9" fill="none"/>
<path d="M116,411 Q142,406 165,391.5" stroke="#4a4a50" stroke-width="0.8" fill="none"/>
<!-- spoiler -->
<path d="M40,364 Q55,356 71,348" stroke="#ececec" stroke-width="1.8" fill="none"/>
<path d="M69,345 L71.5,352 L72.8,361" stroke="#3a1008" stroke-width="1.6" fill="none"/>
<path d="M74,345 L73,352" stroke="#3a1008" stroke-width="1.2" fill="none"/>
<ellipse cx="72.8" cy="361" rx="2.4" ry="1.5" fill="#4a1408"/>
<path d="M28.5,360 Q42,350 72,337.5 Q78,337 83.5,345.5 L76,346.5 Q56,352 38.5,362 L30.5,366.5 Z" fill="#e83a08"/>
<path d="M30.5,366.5 L38.5,362 Q56,352 76,346.5 L83.5,345.5 L82,347.5 L76,348.5 Q56,354 39,364 L31,368 Z" fill="#8a1400"/>
<path d="M31,359 Q45,350 72,339.5" stroke="#f2602a" stroke-width="0.8" fill="none" opacity="0.7"/>
<!-- rear light -->
<ellipse cx="35" cy="375" rx="3.4" ry="6.2" fill="#b8b8bc" transform="rotate(-18 35 375)"/>
<!-- side vent -->
<ellipse cx="70.4" cy="407" rx="4.3" ry="9.4" fill="#d8d8dc" transform="rotate(-20 70.4 407)"/>
<ellipse cx="70.4" cy="407" rx="2.7" ry="7.6" fill="#2c2c30" transform="rotate(-20 70.4 407)"/>
<path d="M68,402 L72.5,401 M68.3,405 L73,404 M68.8,408 L73.5,407 M69.3,411 L74,410" stroke="#505056" stroke-width="0.6"/>
<!-- door lines -->
<path d="M112,408 Q110,425 113,441" stroke="#4a0e02" stroke-width="0.8" fill="none"/>
<path d="M74,390 Q75,412 85,425 L113,440" stroke="#4a0e02" stroke-width="0.7" fill="none" opacity="0.8"/>
<!-- door handle -->
<path d="M73,395 L81,398 L81,401 L73,398 Z" fill="#c43006"/>
<!-- left mirror -->
<path d="M93,404 Q98,401 105,405 L104,410 Q98,409 94,408 Z" fill="#e03a0a"/>
<path d="M94,408 Q98,409 104,410 L103,412 L95,410 Z" fill="#5a1002"/>
<!-- right mirror -->
<ellipse cx="160" cy="376.5" rx="3" ry="4.8" fill="#d8360a" transform="rotate(-25 160 376.5)"/>
<!-- rear wheel -->
<circle cx="49.5" cy="401.3" r="12.9" fill="#4a0c02"/>
<circle cx="47.8" cy="403.2" r="12.2" fill="#4a4a4e"/>
<circle cx="48.4" cy="402.6" r="10" fill="url(#bcRim)"/>
<g stroke="#8c8c92" stroke-width="0.55">
<path d="M48.4,393.4 L48.4,411.8 M39.2,402.6 L57.6,402.6 M41.9,396.1 L54.9,409.1 M54.9,396.1 L41.9,409.1 M44.9,394.1 L51.9,411.1 M51.9,394.1 L44.9,411.1 M39.9,399.1 L56.9,406.1 M39.9,406.1 L56.9,399.1"/>
</g>
<circle cx="48.4" cy="402.6" r="1.8" fill="#8a8a90"/>
<!-- front wheel -->
<circle cx="133" cy="442" r="13.3" fill="#4a0c02"/>
<circle cx="131.5" cy="444" r="12.6" fill="#4a4a4e"/>
<circle cx="132.1" cy="443.3" r="10.2" fill="url(#bcRim)"/>
<g stroke="#8c8c92" stroke-width="0.55">
<path d="M132.1,434 L132.1,452.6 M122.8,443.3 L141.4,443.3 M125.5,436.7 L138.7,449.9 M138.7,436.7 L125.5,449.9 M128.5,434.7 L135.7,451.9 M135.7,434.7 L128.5,451.9 M123.5,439.7 L140.7,446.9 M123.5,446.9 L140.7,439.7"/>
</g>
<circle cx="132.1" cy="443.3" r="1.8" fill="#8a8a90"/>
<!-- headlights -->
<ellipse cx="199" cy="413" rx="3.6" ry="7.8" fill="#d6d6da" transform="rotate(-30 199 413)"/>
<ellipse cx="155" cy="434.5" rx="8.8" ry="4" fill="#dadade" transform="rotate(22 155 434.5)"/>
<!-- grilles -->
<path d="M158.5,450 Q168,448.5 177,450.5 L174,457.5 Q166,459.5 160,458 Q157.5,454 158.5,450 Z" fill="#eeeef0" stroke="#6a6a70" stroke-width="0.6"/>
<path d="M161.8,451.2 L161.8,457 M165,451 L165,457.8 M168.2,451 L168.2,457.8 M171.4,451.3 L170.8,457.5" stroke="#38383e" stroke-width="1.1"/>
<path d="M176,456 L203,444" stroke="#e6e6e8" stroke-width="2.6"/>
<path d="M177,456 L202,445" stroke="#6a6a70" stroke-width="0.8"/>
<path d="M203,432 L209,426 L208,434 L203,438 Z" fill="#e0e0e2"/>
</g>
</svg>

<!-- footer -->
<div class="a" style="left:10px;top:480px;width:665px;height:22px;background:#000"></div>
</body></html>
